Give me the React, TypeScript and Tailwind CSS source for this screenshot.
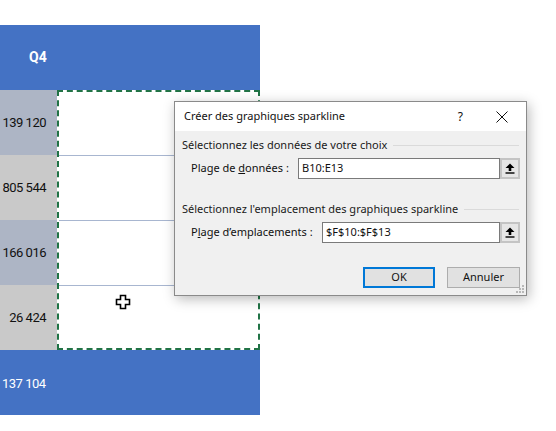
import React from 'react'

const cellFont = { fontFamily: 'Roboto, "Liberation Sans", sans-serif' }
const uiFont = { fontFamily: '"Noto Sans", "Open Sans", sans-serif' }

const values = [
  { v: '139 120', bg: 'bg-[#adb5c5]' },
  { v: '805 544', bg: 'bg-[#c9c9c9]' },
  { v: '166 016', bg: 'bg-[#adb5c5]' },
  { v: '26 424', bg: 'bg-[#c9c9c9]' }
]

function PickButton(): React.ReactElement {
  return (
    <div className="w-[20px] h-[21px] border-2 border-[#c4c4c4] bg-[#e6e6e6] flex items-center justify-center">
      <svg width="10" height="11" viewBox="0 0 10 11">
        <path d="M5 0.5 L9.5 5 L6.3 5 L6.3 8 L3.7 8 L3.7 5 L0.5 5 Z" fill="#000" />
        <rect x="0.5" y="9.3" width="9" height="1.4" fill="#000" />
      </svg>
    </div>
  )
}

function SectionHeader({ text }: { text: string }): React.ReactElement {
  return (
    <div className="flex items-center h-[16px] pl-[7px] pr-[7px]">
      <span className="text-[11px] text-[#1a1a1a] whitespace-nowrap">{text}</span>
      <div className="flex-1 h-px bg-[#dadada] ml-[6px]" />
    </div>
  )
}

export default function App(): React.ReactElement {
  return (
    <div className="relative w-[556px] h-[431px] bg-white overflow-hidden">
      {/* Sheet */}
      <div className="pt-[25px] w-[260px]" style={cellFont}>
        <div className="h-[65px] bg-[#4472c4] flex items-center">
          <span className="pl-[29px] text-white font-bold text-[14px]">Q4</span>
        </div>
        <div className="flex">
          <div className="w-[57px] flex flex-col">
            {values.map((r) => (
              <div
                key={r.v}
                className={`h-[65px] ${r.bg} flex items-center justify-end pr-[11px] text-[13px] text-[#111] tracking-[-0.5px]`}
              >
                {r.v}
              </div>
            ))}
          </div>
          <div className="flex-1 border-2 border-dashed border-[#217346] flex flex-col">
            <div className="h-[64px] border-b border-[#a8b6d0]" />
            <div className="h-[65px] border-b border-[#a8b6d0]" />
            <div className="h-[65px] border-b border-[#a8b6d0]" />
            <div className="flex-1" />
          </div>
        </div>
        <div className="h-[65px] bg-[#4472c4] flex items-center pt-[3px]">
          <span className="pl-[2px] text-white text-[13px] tracking-[-0.5px]">137 104</span>
        </div>
      </div>

      {/* Cursor */}
      <svg className="absolute left-[115px] top-[294px]" width="17" height="17" viewBox="0 0 17 17">
        <path
          d="M5.5 1.5 H10.5 V5.5 H14.5 V10.5 H10.5 V14.5 H5.5 V10.5 H1.5 V5.5 H5.5 Z"
          fill="#fff"
          stroke="#000"
          strokeWidth="1.6"
        />
      </svg>

      {/* Dialog */}
      <div
        className="absolute left-[174px] top-[101px] w-[353px] h-[195px] border border-[#8a8a8a] bg-[#f0f0f0] flex flex-col shadow-[2px_3px_12px_rgba(0,0,0,0.28)]"
        style={uiFont}
      >
        <div className="h-[29px] bg-white flex items-center pl-[9px]">
          <span className="text-[11px] text-[#111]">Créer des graphiques sparkline</span>
          <span className="ml-auto text-[12px] text-[#111] mr-[33px]">?</span>
          <svg className="mr-[18px]" width="12" height="12" viewBox="0 0 12 12">
            <path d="M0.5 0.5 L11.5 11.5 M11.5 0.5 L0.5 11.5" stroke="#111" strokeWidth="1" />
          </svg>
        </div>

        <div className="mt-[6px]">
          <SectionHeader text="Sélectionnez les données de votre choix" />
        </div>
        <div className="mt-[5px] flex items-center h-[21px] pl-[16px]">
          <span className="w-[107px] text-[11px] text-[#111] whitespace-nowrap">
            Plage de <span className="underline">d</span>onnées :
          </span>
          <div className="w-[202px] h-[21px] border border-[#7a7a7a] bg-white flex items-center pl-[3px] text-[11px] text-[#111]">
            B10:E13
          </div>
          <PickButton />
        </div>

        <div className="mt-[22px]">
          <SectionHeader text="Sélectionnez l'emplacement des graphiques sparkline" />
        </div>
        <div className="mt-[5px] flex items-center h-[21px] pl-[16px]">
          <span className="w-[131px] text-[11px] text-[#111] whitespace-nowrap">
            P<span className="underline">l</span>age d’emplacements :
          </span>
          <div className="w-[178px] h-[21px] border border-[#7a7a7a] bg-white flex items-center pl-[3px] text-[11px] text-[#111]">
            $F$10:$F$13
          </div>
          <PickButton />
        </div>

        <div className="mt-[24px] flex justify-end pr-[6px] gap-[12px]">
          <button className="w-[72px] h-[21px] border-2 border-[#0078d7] bg-[#e1e1e1] text-[11px] text-[#111] flex items-center justify-center">
            OK
          </button>
          <button className="w-[73px] h-[21px] border border-[#adadad] bg-[#e1e1e1] text-[11px] text-[#111] flex items-center justify-center">
            Annuler
          </button>
        </div>

        <svg className="absolute right-[1px] bottom-[1px]" width="10" height="10" viewBox="0 0 10 10">
          <rect x="7" y="1" width="2" height="2" fill="#b8b8b8" />
          <rect x="4" y="4" width="2" height="2" fill="#b8b8b8" />
          <rect x="7" y="4" width="2" height="2" fill="#b8b8b8" />
          <rect x="1" y="7" width="2" height="2" fill="#b8b8b8" />
          <rect x="4" y="7" width="2" height="2" fill="#b8b8b8" />
          <rect x="7" y="7" width="2" height="2" fill="#b8b8b8" />
        </svg>
      </div>
    </div>
  )
}
